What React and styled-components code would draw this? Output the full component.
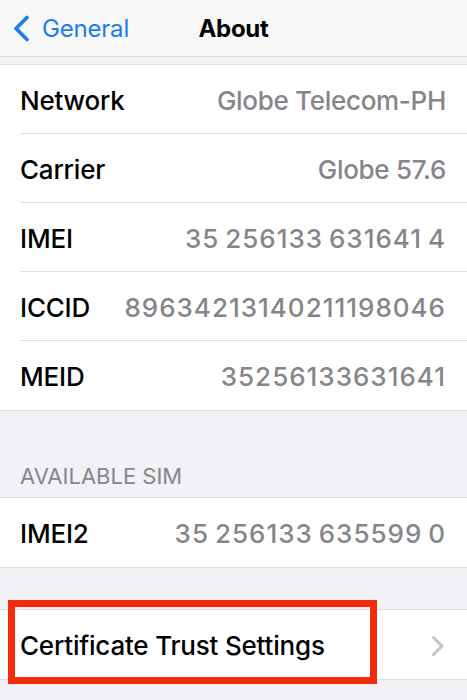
import React from "react";
import styled, { createGlobalStyle } from "styled-components";

const rows = [
  { label: "Network", value: "Globe Telecom-PH" },
  { label: "Carrier", value: "Globe 57.6" },
  { label: "IMEI", value: "35 256133 631641 4", $num: true },
  { label: "ICCID", value: "89634213140211198046", $num: true },
  { label: "MEID", value: "35256133631641", $num: true },
];

const App = () => {
  return (
    <>
      <GlobalStyle />
      <Page>
        <NavBar>
          <BackButton>
            <svg width="20" height="27" viewBox="0 0 20 27">
              <path
                d="M16 2.5 L5 13.5 L16 24.5"
                fill="none"
                stroke="#1a7cf1"
                strokeWidth="3.6"
                strokeLinecap="round"
                strokeLinejoin="round"
              />
            </svg>
            <BackLabel>General</BackLabel>
          </BackButton>
          <NavTitle>About</NavTitle>
          <span />
        </NavBar>

        <Group $top={7}>
          {rows.map((r) => (
            <Row key={r.label}>
              <RowBody>
                <Label>{r.label}</Label>
                <Value $num={r.$num}>{r.value}</Value>
              </RowBody>
            </Row>
          ))}
        </Group>

        <SectionHeader>AVAILABLE SIM</SectionHeader>
        <Group>
          <Row>
            <RowBody>
              <Label>IMEI2</Label>
              <Value $num>35 256133 635599 0</Value>
            </RowBody>
          </Row>
        </Group>

        <Group $top={41}>
          <Row>
            <RowBody>
              <Label>Certificate Trust Settings</Label>
              <svg width="16" height="22" viewBox="0 0 16 22">
                <path
                  d="M3.5 2.5 L12 11 L3.5 19.5"
                  fill="none"
                  stroke="#c4c4c7"
                  strokeWidth="3"
                  strokeLinecap="round"
                  strokeLinejoin="round"
                />
              </svg>
            </RowBody>
            <Highlight />
          </Row>
        </Group>
      </Page>
    </>
  );
};

export default App;

// style
const GlobalStyle = createGlobalStyle`
  body {
    margin: 0;
    background: #f1f1f6;
    font-family: Inter, "Liberation Sans", sans-serif;
  }
`;

const Page = styled.div`
  width: 467px;
  height: 700px;
  overflow: hidden;
  background: #f1f1f6;
`;

const NavBar = styled.div`
  height: 56px;
  display: grid;
  grid-template-columns: 1fr auto 1fr;
  align-items: center;
  background: #f8f8f9;
  border-bottom: 1px solid #dadade;
`;

const BackButton = styled.div`
  display: flex;
  align-items: center;
  gap: 11px;
  padding-left: 11px;
  color: #1a7cf1;
`;

const BackLabel = styled.span`
  font-size: 24px;
  letter-spacing: -0.2px;
`;

const NavTitle = styled.span`
  font-size: 24px;
  font-weight: 700;
  color: #000;
  letter-spacing: -0.3px;
`;

const Group = styled.div`
  margin-top: ${(p) => p.$top || 0}px;
  background: #fff;
  border-top: 1px solid #e2e2e6;
  border-bottom: 1px solid #dcdce0;
`;

const Row = styled.div`
  position: relative;
  padding-left: 20px;

  &:not(:last-child) > div {
    border-bottom: 1px solid #e0e0e4;
  }
`;

const RowBody = styled.div`
  height: 69px;
  box-sizing: border-box;
  padding-right: 21px;
  display: flex;
  align-items: center;
  justify-content: space-between;
  padding-top: 2px;
`;

const Label = styled.span`
  font-size: 26px;
  font-weight: 500;
  color: #000;
  letter-spacing: -0.2px;
`;

const Value = styled.span`
  font-size: 26px;
  font-weight: 500;
  color: #86868a;
  letter-spacing: ${(p) => (p.$num ? "1px" : "-0.3px")};
  word-spacing: ${(p) => (p.$num ? "-2px" : "0")};
`;

const SectionHeader = styled.div`
  height: 86px;
  box-sizing: border-box;
  display: flex;
  align-items: flex-end;
  padding: 0 20px 8px;
  font-size: 22px;
  color: #86868b;
`;

const Highlight = styled.div`
  position: absolute;
  left: 8px;
  top: -10px;
  width: 369px;
  height: 84px;
  box-sizing: border-box;
  border: 7px solid #f52a0b;
  pointer-events: none;
`;
